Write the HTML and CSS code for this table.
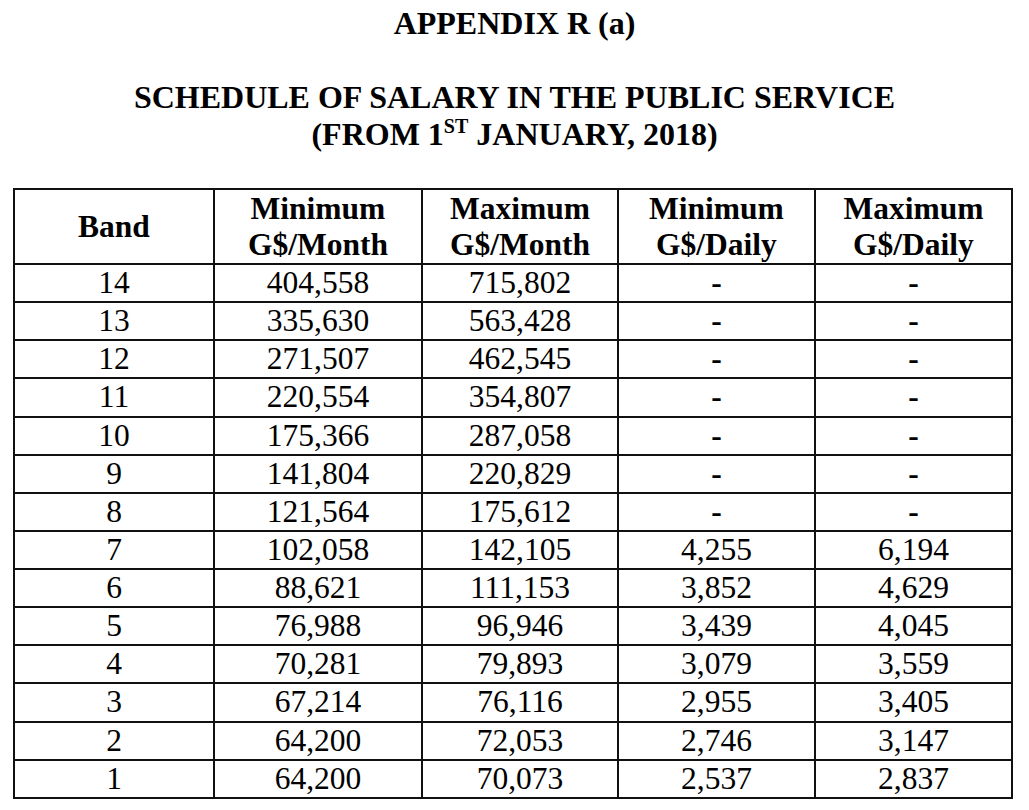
FILE: index.html
```html
<!DOCTYPE html>
<html lang="en">
<head>
<meta charset="utf-8">
<title>Appendix R (a)</title>
<link rel="stylesheet" href="styles.css">
</head>
<body>
<div class="page">
  <header class="titles">
    <h1 class="title">APPENDIX R (a)</h1>
    <h2 class="title subtitle">SCHEDULE OF SALARY IN THE PUBLIC SERVICE</h2>
    <h2 class="title">(FROM 1<sup class="sup">ST</sup> JANUARY, 2018)</h2>
  </header>
  <table class="salary">
    <colgroup>
      <col class="c1"><col class="c2"><col class="c3"><col class="c4"><col class="c5">
    </colgroup>
    <thead>
      <tr class="head-row">
        <th>Band</th>
        <th>Minimum<br>G$/Month</th>
        <th>Maximum<br>G$/Month</th>
        <th>Minimum<br>G$/Daily</th>
        <th>Maximum<br>G$/Daily</th>
      </tr>
    </thead>
    <tbody>
      <tr><td>14</td><td>404,558</td><td>715,802</td><td class="nil">-</td><td class="nil">-</td></tr>
      <tr><td>13</td><td>335,630</td><td>563,428</td><td class="nil">-</td><td class="nil">-</td></tr>
      <tr><td>12</td><td>271,507</td><td>462,545</td><td class="nil">-</td><td class="nil">-</td></tr>
      <tr><td>11</td><td>220,554</td><td>354,807</td><td class="nil">-</td><td class="nil">-</td></tr>
      <tr><td>10</td><td>175,366</td><td>287,058</td><td class="nil">-</td><td class="nil">-</td></tr>
      <tr><td>9</td><td>141,804</td><td>220,829</td><td class="nil">-</td><td class="nil">-</td></tr>
      <tr><td>8</td><td>121,564</td><td>175,612</td><td class="nil">-</td><td class="nil">-</td></tr>
      <tr><td>7</td><td>102,058</td><td>142,105</td><td>4,255</td><td>6,194</td></tr>
      <tr><td>6</td><td>88,621</td><td>111,153</td><td>3,852</td><td>4,629</td></tr>
      <tr><td>5</td><td>76,988</td><td>96,946</td><td>3,439</td><td>4,045</td></tr>
      <tr><td>4</td><td>70,281</td><td>79,893</td><td>3,079</td><td>3,559</td></tr>
      <tr><td>3</td><td>67,214</td><td>76,116</td><td>2,955</td><td>3,405</td></tr>
      <tr><td>2</td><td>64,200</td><td>72,053</td><td>2,746</td><td>3,147</td></tr>
      <tr><td>1</td><td>64,200</td><td>70,073</td><td>2,537</td><td>2,837</td></tr>
    </tbody>
  </table>
</div>
</body>
</html>
```

FILE: styles.css
```css
html, body {
  margin: 0;
  padding: 0;
  background: #ffffff;
}

.page {
  width: 1029px;
  padding-top: 5px;
  font-family: "Liberation Serif", "Times New Roman", serif;
  color: #000000;
}

.titles {
  text-align: center;
}

.title {
  margin: 0;
  font-size: 32px;
  line-height: 37px;
  font-weight: bold;
}

.subtitle {
  margin-top: 37px;
}

.sup {
  font-size: 20px;
  line-height: 0;
  vertical-align: 12px;
}

.salary {
  margin-top: 35px;
  margin-left: 13px;
  border-collapse: collapse;
  table-layout: fixed;
  width: 1000px;
}

.c1 { width: 200px; }
.c2 { width: 208px; }
.c3 { width: 196px; }
.c4 { width: 197px; }
.c5 { width: 197px; }

.salary th,
.salary td {
  border: 2px solid #111111;
  padding: 0;
  text-align: center;
  vertical-align: middle;
  font-size: 31.5px;
  line-height: 36px;
}

.salary th {
  font-weight: bold;
}

.salary td.nil {
  font-weight: bold;
}

.head-row {
  height: 75px;
}

.salary tbody tr {
  height: 38.14px;
}
```
